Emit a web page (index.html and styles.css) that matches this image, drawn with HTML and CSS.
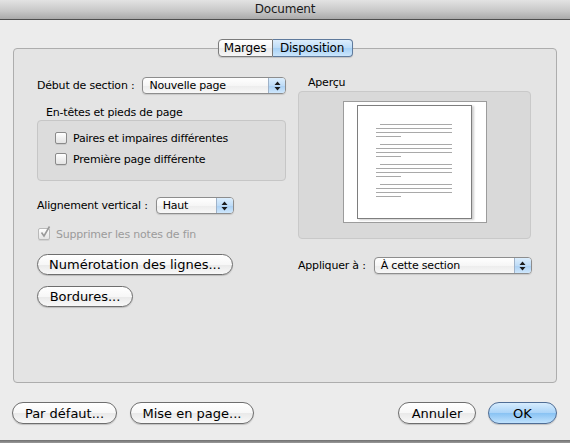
FILE: index.html
```html
<!DOCTYPE html>
<html lang="fr">
<head>
    <meta charset="UTF-8">
    <meta name="viewport" content="width=device-width, initial-scale=1.0">
    <title>Document</title>
    <link rel="stylesheet" href="styles.css">
</head>
<body>

    <div class="titlebar">Document</div>

    <div class="panel">
        <div class="tabs">
            <span class="tab tab-margins">Marges</span>
            <span class="tab tab-layout selected">Disposition</span>
        </div>

        <div class="panel-body">
            <!-- left column: section settings -->
            <div class="col-left">
                <div class="row row-section">
                    <span class="label">Début de section :</span>
                    <div class="popup popup-section">
                        <span class="popup-value">Nouvelle page</span>
                        <span class="popup-arrows">
                            <svg width="7" height="10" viewBox="0 0 7 10"><path d="M3.5 0.5 L6.5 4 H0.5 Z M3.5 9.5 L6.5 6 H0.5 Z" fill="#1c1c1c"/></svg>
                        </span>
                    </div>
                </div>

                <div class="group-title">En-têtes et pieds de page</div>
                <div class="group">
                    <label class="check-row">
                        <span class="checkbox"></span>
                        <span>Paires et impaires différentes</span>
                    </label>
                    <label class="check-row">
                        <span class="checkbox"></span>
                        <span>Première page différente</span>
                    </label>
                </div>

                <div class="row row-align">
                    <span class="label">Alignement vertical :</span>
                    <div class="popup popup-align">
                        <span class="popup-value">Haut</span>
                        <span class="popup-arrows">
                            <svg width="7" height="10" viewBox="0 0 7 10"><path d="M3.5 0.5 L6.5 4 H0.5 Z M3.5 9.5 L6.5 6 H0.5 Z" fill="#1c1c1c"/></svg>
                        </span>
                    </div>
                </div>

                <label class="check-row disabled">
                    <span class="checkbox checked">
                        <svg width="12" height="13" viewBox="0 0 12 13"><path d="M2.5 6.5 L5 10 L10.5 0.5" fill="none" stroke="#9a9a9a" stroke-width="1.6"/></svg>
                    </span>
                    <span>Supprimer les notes de fin</span>
                </label>

                <button class="btn btn-lines">Numérotation des lignes...</button>
                <button class="btn btn-borders">Bordures...</button>
            </div>

            <!-- right column: preview and scope -->
            <div class="col-right">
                <div class="preview-title">Aperçu</div>
                <div class="preview">
                    <div class="sheet-frame">
                        <div class="page">
                            <div class="para"><i class="indent"></i><i></i><i></i><i class="short"></i></div>
                            <div class="para"><i class="indent"></i><i></i><i></i><i class="short"></i></div>
                            <div class="para"><i class="indent"></i><i></i><i></i><i class="short"></i></div>
                            <div class="para"><i class="indent"></i><i></i><i></i><i class="short"></i></div>
                        </div>
                    </div>
                </div>

                <div class="row row-apply">
                    <span class="label">Appliquer à :</span>
                    <div class="popup popup-apply">
                        <span class="popup-value">À cette section</span>
                        <span class="popup-arrows">
                            <svg width="7" height="10" viewBox="0 0 7 10"><path d="M3.5 0.5 L6.5 4 H0.5 Z M3.5 9.5 L6.5 6 H0.5 Z" fill="#1c1c1c"/></svg>
                        </span>
                    </div>
                </div>
            </div>
        </div>
    </div>

    <div class="footer">
        <button class="btn btn-default">Par défaut...</button>
        <button class="btn btn-setup">Mise en page...</button>
        <span class="spacer"></span>
        <button class="btn btn-cancel">Annuler</button>
        <button class="btn btn-ok">OK</button>
    </div>

    <div class="window-edge"></div>

</body>
</html>
```

FILE: styles.css
```css
* {
    box-sizing: border-box;
}

body {
    margin: 0;
    width: 570px;
    height: 443px;
    overflow: hidden;
    display: flex;
    flex-direction: column;
    background-color: #ececec;
    font-family: "DejaVu Sans", Verdana, sans-serif;
    font-size: 11px;
    letter-spacing: -0.2px;
    color: #000;
    white-space: nowrap;
}

/* window title */
.titlebar {
    height: 20px;
    line-height: 19px;
    text-align: center;
    font-size: 12px;
    color: #1a1a1a;
    background: linear-gradient(#e3e3e3, #c6c6c6 60%, #aaaaaa);
    border-bottom: 1px solid #4e4e4e;
}

/* tab view */
.panel {
    margin: 28px 0 0 13px;
    width: 544px;
    height: 335px;
    border: 1px solid #adadad;
    border-radius: 4px;
    background-color: #e4e4e4;
}

.tabs {
    display: flex;
    justify-content: center;
    margin-top: -10px;
}

.tab {
    height: 18px;
    line-height: 16px;
    text-align: center;
    font-size: 12px;
    letter-spacing: -0.2px;
    border: 1px solid #7b7b7b;
    background: linear-gradient(#ffffff, #f4f4f4 50%, #e9e9e9 51%, #f6f6f6);
    box-shadow: 0 1px 1px rgba(0, 0, 0, 0.15);
}

.tab-margins {
    width: 55px;
    border-radius: 4px 0 0 4px;
}

.tab-layout {
    width: 80px;
    border-left: none;
    border-radius: 0 4px 4px 0;
}

.tab.selected {
    border-color: #5f7a9c;
    background: linear-gradient(#dcedfc, #bcdcf8 50%, #a6d0f5 51%, #cbe6fc);
}

.panel-body {
    display: flex;
    gap: 12px;
    padding-left: 23px;
}

.col-left {
    width: 249px;
    display: flex;
    flex-direction: column;
    align-items: flex-start;
}

.col-right {
    width: 233px;
    display: flex;
    flex-direction: column;
}

.row {
    display: flex;
    align-items: center;
    gap: 8px;
    height: 17px;
}

.label {
    flex-shrink: 0;
}

.row-section {
    margin-top: 20px;
    width: 249px;
    justify-content: space-between;
}

.row-align {
    margin-top: 16px;
}

.row-apply {
    margin-top: 18px;
    justify-content: space-between;
}

/* popup menus */
.popup {
    display: flex;
    flex-shrink: 0;
    height: 17px;
    border: 1px solid #8d8d8d;
    border-radius: 4px;
    overflow: hidden;
    background: linear-gradient(#ffffff, #f6f6f6 50%, #ececec 51%, #f7f7f7);
    box-shadow: 0 1px 1px rgba(0, 0, 0, 0.12);
}

.popup-value {
    flex: 1;
    line-height: 15px;
    padding-left: 6px;
}

.popup-arrows {
    width: 17px;
    display: flex;
    align-items: center;
    justify-content: center;
    border-left: 1px solid #9fb2c8;
    background: linear-gradient(#dceefd, #bfdcf7 50%, #a9cff3 51%, #cfe7fc);
}

.popup-section {
    width: 144px;
}

.popup-align {
    width: 78px;
}

.popup-apply {
    width: 158px;
}

/* header / footer group */
.group-title {
    margin-top: 11px;
    padding-left: 9px;
    line-height: 15px;
}

.group {
    width: 249px;
    height: 61px;
    padding: 9px 0 0 17px;
    border: 1px solid #c6c6c6;
    border-radius: 4px;
    background-color: #dcdcdc;
}

.check-row {
    display: flex;
    align-items: center;
    gap: 6px;
    height: 16px;
}

.check-row + .check-row {
    margin-top: 5px;
}

.checkbox {
    position: relative;
    width: 12px;
    height: 12px;
    border: 1px solid #8a8a8a;
    border-radius: 2px;
    background: linear-gradient(#ffffff, #f0f0f0 50%, #e4e4e4);
    box-shadow: 0 1px 0 rgba(0, 0, 0, 0.08);
}

.checkbox svg {
    position: absolute;
    left: 0;
    top: -3px;
}

.check-row.disabled {
    margin-top: 12px;
    padding-left: 1px;
    color: #9b9b9b;
}

.check-row.disabled .checkbox {
    border-color: #b9b9b9;
}

/* push buttons */
.btn {
    height: 21px;
    padding: 0;
    font-family: inherit;
    font-size: 13px;
    letter-spacing: 0;
    color: #000;
    border: 1px solid #6e6e6e;
    border-radius: 11px;
    background: linear-gradient(#ffffff, #f7f7f7 50%, #e9e9e9 51%, #f8f8f8);
    box-shadow: 0 1px 1px rgba(0, 0, 0, 0.18);
}

.btn-lines {
    margin-top: 12px;
    width: 196px;
}

.btn-borders {
    margin-top: 11px;
    width: 96px;
}

/* page preview */
.preview-title {
    margin-top: 18px;
    padding-left: 10px;
    line-height: 15px;
}

.preview {
    margin-top: 1px;
    height: 148px;
    display: flex;
    justify-content: center;
    align-items: flex-start;
    padding-top: 9px;
    border: 1px solid #c9c9c9;
    border-radius: 4px;
    background-color: #d9d9d9;
}

.sheet-frame {
    width: 144px;
    height: 122px;
    display: flex;
    justify-content: center;
    padding-top: 3px;
    background-color: #fff;
    border: 1px solid #9c9c9c;
}

.page {
    width: 115px;
    height: 114px;
    padding: 18px 0 0 18px;
    border: 1px solid #7e7e7e;
    background-color: #fff;
    box-shadow: 2px 1px 2px rgba(0, 0, 0, 0.2);
}

.para + .para {
    margin-top: 7px;
}

.para i {
    display: block;
    width: 76px;
    height: 1px;
    background-color: #a9a9a9;
}

.para i + i {
    margin-top: 3px;
}

.para i.indent {
    margin-left: 4px;
    width: 72px;
}

.para i.short {
    width: 25px;
}

/* dialog buttons */
.footer {
    display: flex;
    gap: 13px;
    margin-top: 19px;
    padding: 0 13px 0 12px;
}

.footer .btn {
    height: 22px;
}

.spacer {
    flex: 1;
}

.btn-default {
    width: 105px;
}

.btn-setup {
    width: 124px;
}

.btn-cancel {
    width: 78px;
    margin-right: -1px;
}

.btn-ok {
    width: 69px;
    border-color: #4f6d95;
    background: linear-gradient(#d7ecfd, #a9d3f8 50%, #88c2f3 51%, #c0e2fd);
}

.window-edge {
    margin-top: auto;
    height: 3px;
    background: linear-gradient(#6f6f6f, #9a9a9a);
}
```
